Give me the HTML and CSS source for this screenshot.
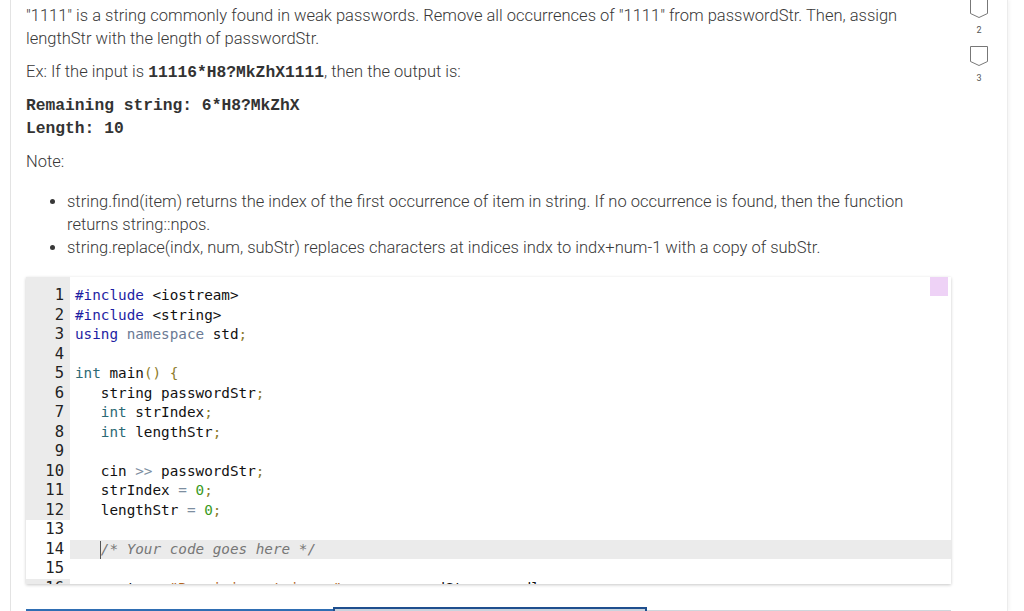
FILE: index.html
```html
<!DOCTYPE html>
<html>
<head>
<meta charset="utf-8">
<link rel="stylesheet" href="styles.css">
</head>
<body>
<div class="page">
  <div class="main">
    <div class="content">
      <p>"1111" is a string commonly found in weak passwords. Remove all occurrences of "1111" from passwordStr. Then, assign lengthStr with the length of passwordStr.</p>
      <p>Ex: If the input is <code class="inline">11116*H8?MkZhX1111</code>, then the output is:</p>
      <pre class="sample">Remaining string: 6*H8?MkZhX
Length: 10</pre>
      <p>Note:</p>
      <ul class="notes">
        <li>string.find(item) returns the index of the first occurrence of item in string. If no occurrence is found, then the function returns string::npos.</li>
        <li>string.replace(indx, num, subStr) replaces characters at indices indx to indx+num-1 with a copy of subStr.</li>
      </ul>
      <div class="editor">
        <div class="flag"></div>
        <div class="line"><span class="num">1</span><span class="code"><span class="kw">#include</span> &lt;iostream&gt;</span></div>
        <div class="line"><span class="num">2</span><span class="code"><span class="kw">#include</span> &lt;string&gt;</span></div>
        <div class="line"><span class="num">3</span><span class="code"><span class="kw">using</span> <span class="ns">namespace</span> std<span class="pn">;</span></span></div>
        <div class="line"><span class="num">4</span><span class="code"></span></div>
        <div class="line"><span class="num">5</span><span class="code"><span class="ty">int</span> main<span class="pn">()</span> <span class="pn">{</span></span></div>
        <div class="line"><span class="num">6</span><span class="code">   string passwordStr<span class="pn">;</span></span></div>
        <div class="line"><span class="num">7</span><span class="code">   <span class="ty">int</span> strIndex<span class="pn">;</span></span></div>
        <div class="line"><span class="num">8</span><span class="code">   <span class="ty">int</span> lengthStr<span class="pn">;</span></span></div>
        <div class="line"><span class="num">9</span><span class="code"></span></div>
        <div class="line"><span class="num">10</span><span class="code">   cin <span class="op">&gt;&gt;</span> passwordStr<span class="pn">;</span></span></div>
        <div class="line"><span class="num">11</span><span class="code">   strIndex <span class="op">=</span> <span class="nu">0</span><span class="pn">;</span></span></div>
        <div class="line"><span class="num">12</span><span class="code">   lengthStr <span class="op">=</span> <span class="nu">0</span><span class="pn">;</span></span></div>
        <div class="line plain"><span class="num">13</span><span class="code"></span></div>
        <div class="line plain active"><span class="num">14</span><span class="code">   <span class="caret"></span><span class="cm">/* Your code goes here */</span></span></div>
        <div class="line plain"><span class="num">15</span><span class="code"></span></div>
        <div class="line"><span class="num">16</span><span class="code">   cout <span class="op">&lt;&lt;</span> <span class="st">"Remaining string: "</span> <span class="op">&lt;&lt;</span> passwordStr <span class="op">&lt;&lt;</span> endl<span class="pn">;</span></span></div>
      </div>
      <div class="actions">
        <div class="btn-run"></div>
        <div class="btn-outline"></div>
        <div class="btn-rest"></div>
      </div>
    </div>
    <div class="markers">
      <svg class="mark first" width="20" height="20" viewBox="0 0 20 20"><path d="M1.5 0.5 H18.5 V15.5 L10 19.5 L1.5 15.5 Z" fill="#fff" stroke="#777" stroke-width="1"/></svg>
      <span class="mnum">2</span>
      <svg class="mark" width="20" height="20" viewBox="0 0 20 20"><path d="M1.5 0.5 H18.5 V15.5 L10 19.5 L1.5 15.5 Z" fill="#fff" stroke="#777" stroke-width="1"/></svg>
      <span class="mnum">3</span>
    </div>
  </div>
</div>
</body>
</html>
```
FILE: styles.css
```css
html, body {
  margin: 0;
  padding: 0;
  background: #ffffff;
}
body {
  font-family: Roboto, "Liberation Sans", sans-serif;
  font-weight: 300;
  font-size: 16.5px;
  color: #383838;
  width: 1024px;
  height: 611px;
  overflow: hidden;
}
.page {
  height: 611px;
  display: flex;
}
.main {
  margin-left: 10px;
  width: 996px;
  height: 611px;
  border-left: 1px solid #e3e3e3;
  border-right: 1px solid #ececec;
  box-shadow: 2px 0 3px rgba(0,0,0,0.04);
  display: flex;
  overflow: hidden;
}
.content {
  width: 925px;
  padding-left: 15px;
  padding-top: 4px;
  flex: none;
}
p {
  margin: 0 0 10px 0;
  line-height: 23px;
}
code.inline {
  font-family: "Liberation Mono", monospace;
  font-weight: 700;
  font-size: 16.3px;
  color: #333;
}
pre.sample {
  margin: 0 0 10px 0;
  font-family: "Liberation Mono", monospace;
  font-weight: 700;
  font-size: 16.3px;
  line-height: 23px;
  color: #333;
}
ul.notes {
  margin: 16.5px 0 18.5px 0;
  padding-left: 41px;
  line-height: 23px;
}
.editor {
  position: relative;
  height: 307px;
  overflow: hidden;
  background: #fff;
  box-shadow: 0 1px 3px rgba(0,0,0,0.22);
  padding-top: 9px;
  box-sizing: border-box;
  background-image: linear-gradient(#ebebeb, #ebebeb);
  background-repeat: no-repeat;
  background-size: 44px 100%;
  font-family: "DejaVu Sans Mono", monospace;
  font-size: 14.3px;
  font-weight: 400;
}
.flag {
  position: absolute;
  top: 0;
  right: 3px;
  width: 18px;
  height: 19px;
  background: #eed2f6;
}
.line {
  display: flex;
  height: 19.5px;
  line-height: 19.5px;
}
.num {
  width: 38px;
  padding-right: 6px;
  text-align: right;
  color: #222;
  font-size: 15.5px;
  flex: none;
}
.line.plain .num {
  background: #fff;
}
.code {
  padding-left: 5px;
  white-space: pre;
  color: #111;
  flex: 1;
  position: relative;
}
.line.active .code {
  background: #ebebeb;
}
.caret {
  position: absolute;
  left: 30px;
  top: 1px;
  width: 1px;
  height: 18px;
  background: #555;
}
.kw { color: #1e1ea3; }
.ns { color: #6b7a94; }
.ty { color: #2d6a75; }
.pn { color: #8d7b2c; }
.op { color: #7d8ea0; }
.nu { color: #3b9a1e; }
.st { color: #b5651d; }
.cm { color: #777; font-style: italic; }
.actions {
  display: flex;
  align-items: flex-start;
  margin-top: 23px;
}
.btn-run {
  width: 307px;
  height: 40px;
  margin-top: 2px;
  background: #2f6eb3;
}
.btn-outline {
  width: 310px;
  height: 40px;
  border: 2px solid #1f4f8e;
  background: #c9d4de;
}
.btn-rest {
  flex: 1;
  height: 40px;
  margin-top: 3px;
  background: #cfd6dc;
}
.markers {
  flex: 1;
  display: flex;
  flex-direction: column;
  align-items: center;
}
.mark {
  display: block;
  margin-top: 10px;
}
.mark.first {
  margin-top: -2px;
}
.mnum {
  display: block;
  margin-top: 6px;
  font-size: 9px;
  line-height: 12px;
  font-weight: 400;
  color: #555;
}
```
